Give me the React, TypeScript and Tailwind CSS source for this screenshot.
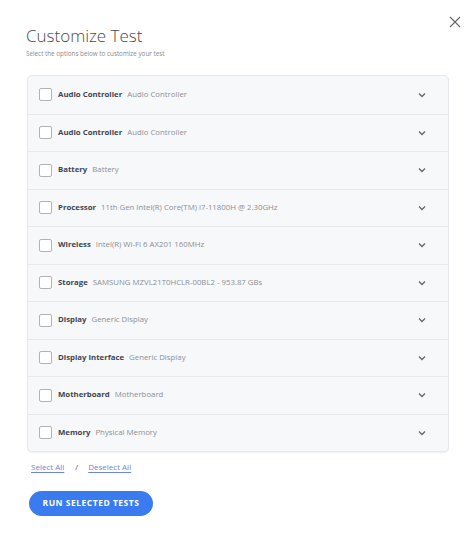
import React from "react";

const items: [string, string][] = [
  ["Audio Controller", "Audio Controller"],
  ["Audio Controller", "Audio Controller"],
  ["Battery", "Battery"],
  ["Processor", "11th Gen Intel(R) Core(TM) i7-11800H @ 2.30GHz"],
  ["Wireless", "Intel(R) Wi-Fi 6 AX201 160MHz"],
  ["Storage", "SAMSUNG MZVL21T0HCLR-00BL2 - 953.87 GBs"],
  ["Display", "Generic Display"],
  ["Display Interface", "Generic Display"],
  ["Motherboard", "Motherboard"],
  ["Memory", "Physical Memory"],
];

export default function App() {
  return (
    <div
      className="relative w-[474px] h-[545px] bg-white"
      style={{ fontFamily: '"Open Sans", "Noto Sans", sans-serif' }}
    >
      <button className="absolute left-[447px] top-[14px] w-[16px] h-[16px] flex items-center justify-center text-[#555]">
        <svg width="12" height="12" viewBox="0 0 12 12" fill="none" stroke="#666" strokeWidth="1.1">
          <path d="M1 1 L11 11 M11 1 L1 11" />
        </svg>
      </button>
      <div className="pt-[26px] pl-[26px] pr-[25px]">
        <h1 className="text-[17px] leading-[20px] font-light text-[#4a4a4a]">Customize Test</h1>
        <p className="mt-[4px] text-[6.3px] leading-[8px] text-[#8a8a8a]">
          Select the options below to customize your test
        </p>
        <div className="mt-[17px] ml-[1px] w-[422px] rounded-[5px] border border-[#e6e8eb] bg-[#f7f8fa] shadow-[0_1px_2px_rgba(0,0,0,0.06)]">
          {items.map(([label, desc], i) => (
            <div
              key={i}
              className={
                "flex items-center h-[37.5px] pl-[11px] pr-[22px] " +
                (i > 0 ? "border-t border-[#e6e8eb]" : "")
              }
            >
              <span className="w-[13px] h-[13px] rounded-[2px] border border-[#b3b3b3] bg-white shrink-0" />
              <span className="ml-[6px] text-[7.8px] font-bold text-[#3f4550]">{label}</span>
              <span className="ml-[5px] text-[7.8px] text-[#8c8f94]">{desc}</span>
              <span className="ml-auto">
                <svg width="8" height="6" viewBox="0 0 8 6" fill="none" stroke="#666" strokeWidth="1.3">
                  <path d="M1 1.5 L4 4.5 L7 1.5" />
                </svg>
              </span>
            </div>
          ))}
        </div>
        <div className="flex items-center mt-[9px] ml-[5px] text-[8px] text-[#6f86d6]">
          <span className="underline underline-offset-2">Select All</span>
          <span className="ml-[11px] mr-[10px] text-[#555]">/</span>
          <span className="underline underline-offset-2">Deselect All</span>
        </div>
        <button className="mt-[18px] ml-[3px] w-[124px] h-[25px] rounded-full bg-[#3a7bf0] text-white text-[8.5px] font-bold tracking-[0.06em]">
          RUN SELECTED TESTS
        </button>
      </div>
    </div>
  );
}
